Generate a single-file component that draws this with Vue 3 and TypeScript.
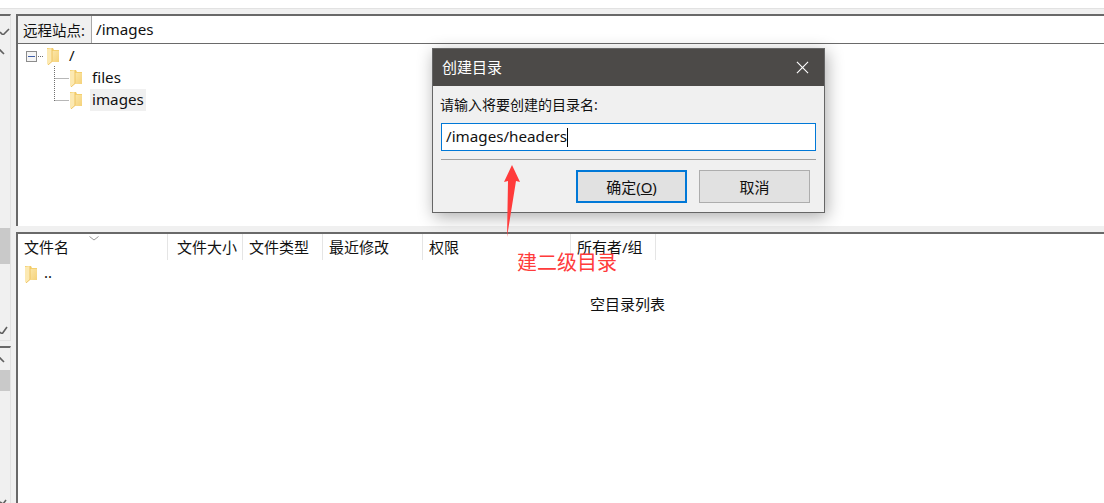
<script setup lang="ts">
const columns = [
  { label: '文件名', width: 150, sorted: true, right: false },
  { label: '文件大小', width: 75, sorted: false, right: true },
  { label: '文件类型', width: 80, sorted: false, right: false },
  { label: '最近修改', width: 100, sorted: false, right: false },
  { label: '权限', width: 148, sorted: false, right: false },
  { label: '所有者/组', width: 85, sorted: false, right: false },
]

const treeChildren = [
  { name: 'files', selected: false },
  { name: 'images', selected: true },
]
</script>

<template>
  <div class="app">
    <svg class="defs" aria-hidden="true">
      <defs>
        <linearGradient id="folder-body" x1="0" y1="0" x2="1" y2="1">
          <stop offset="0" stop-color="#fbe6a8"></stop>
          <stop offset="1" stop-color="#f5d27a"></stop>
        </linearGradient>
        <symbol id="folder" viewBox="0 0 12 17">
          <path d="M0 0H6L7 2H12V14H0Z" fill="#f4d06f"></path>
          <path d="M5 3H12V14H5Z" fill="url(#folder-body)"></path>
          <path d="M0 1L5 0V13.500L1 17L0 15.500Z" fill="#fce9b2"></path>
          <path d="M5 0V13.500L1 17" fill="none" stroke="#eec463" stroke-width="1"></path>
        </symbol>
      </defs>
    </svg>

    <div class="top-strip"></div>

    <div class="main">
      <aside class="side">
        <section class="side-pane side-pane--upper">
          <svg class="chev" viewBox="0 0 10 10" aria-hidden="true"><path d="M0 7L3 10L9 4"></path></svg>
          <svg class="chev chev--up" viewBox="0 0 10 10" aria-hidden="true"><path d="M-2 2L4 8"></path></svg>
          <div class="thumb thumb--upper"></div>
          <svg class="chev chev--end" viewBox="0 0 10 10" aria-hidden="true"><path d="M0 8L2 10L7 3"></path></svg>
        </section>
        <section class="side-pane side-pane--lower">
          <svg class="chev chev--lower-up" viewBox="0 0 10 10" aria-hidden="true"><path d="M-2 2L4 8"></path></svg>
          <div class="thumb thumb--lower"></div>
          <svg class="chev chev--foot" viewBox="0 0 10 10" aria-hidden="true"><path d="M0 8L3 10L6 6"></path></svg>
        </section>
      </aside>

      <div class="panels">
        <section class="panel panel--tree">
          <div class="address">
            <span class="address__label">远程站点:</span>
            <span class="address__value">/images</span>
          </div>

          <div class="tree">
            <svg class="tree__lines" viewBox="0 0 100 80" aria-hidden="true">
              <path d="M20 11.500H26M36.500 21V56M36.500 33.500H51M36.500 55.500H51"></path>
            </svg>
            <div class="tree__row tree__row--root">
              <span class="expander"><i></i></span>
              <svg class="folder" aria-hidden="true"><use href="#folder"></use></svg>
              <span class="tree__name tree__name--root">/</span>
            </div>
            <div v-for="child in treeChildren" :key="child.name" class="tree__row tree__row--child">
              <svg class="folder" aria-hidden="true"><use href="#folder"></use></svg>
              <span class="tree__name" :class="{ 'tree__name--selected': child.selected }">{{ child.name }}</span>
            </div>
          </div>
        </section>

        <section class="panel panel--list">
          <div class="list-head">
            <div
              v-for="col in columns"
              :key="col.label"
              class="list-head__cell"
              :class="{ 'list-head__cell--right': col.right }"
              :style="{ width: col.width + 'px' }"
            >
              <svg v-if="col.sorted" class="sort" viewBox="0 0 10 5" aria-hidden="true"><path d="M.5 .5L5 4L9.500 .5"></path></svg>
              {{ col.label }}
            </div>
          </div>
          <div class="list-row">
            <svg class="folder" aria-hidden="true"><use href="#folder"></use></svg>
            <span class="list-row__name">..</span>
          </div>
          <p class="list-empty">空目录列表</p>
        </section>
      </div>
    </div>

    <div class="dialog" role="dialog">
      <header class="dialog__title">
        <span>创建目录</span>
        <svg viewBox="0 0 14 14" aria-hidden="true"><path d="M1 1L13 13M13 1L1 13"></path></svg>
      </header>
      <div class="dialog__body">
        <label class="dialog__label">请输入将要创建的目录名:</label>
        <div class="dialog__input"><span class="dialog__text">/images/headers</span><i class="caret"></i></div>
        <hr class="dialog__rule" />
        <div class="dialog__actions">
          <button class="btn btn--primary" type="button">确定(<u>O</u>)</button>
          <button class="btn" type="button">取消</button>
        </div>
      </div>
    </div>

    <svg class="arrow" viewBox="0 0 20 74" aria-hidden="true">
      <path d="M9 0L17 17L13 16L4 72L5 16L1 17Z"></path>
    </svg>
    <span class="note">建二级目录</span>
  </div>
</template>

<style scoped>
.app {
  position: relative;
  display: flex;
  flex-direction: column;
  width: 1104px;
  height: 503px;
  overflow: hidden;
  background: #f0f0f0;
  color: #111;
  font-family: 'Noto Sans', 'Noto Sans CJK SC', sans-serif;
  font-size: 15px;
}

.defs {
  position: absolute;
  width: 0;
  height: 0;
}

.top-strip {
  flex: none;
  height: 8px;
  border-bottom: 1px solid #e2e2e2;
  background: #fff;
}

.main {
  display: grid;
  flex: 1;
  grid-template-columns: 11px minmax(0, 1fr);
  gap: 5px;
  min-height: 0;
  padding-top: 5px;
}

.side {
  display: flex;
  flex-direction: column;
  gap: 5px;
  min-height: 0;
}

.side-pane {
  display: flex;
  flex-direction: column;
  border-top: 2px solid #696969;
  border-right: 1px solid #e2e2e2;
  box-sizing: border-box;
}

.side-pane--upper {
  flex: none;
  height: 327px;
  border-bottom: 1px solid #e2e2e2;
}

.side-pane--lower {
  flex: 1;
  min-height: 0;
  overflow: hidden;
}

.chev {
  flex: none;
  width: 10px;
  height: 10px;
  fill: none;
  stroke: #606060;
  stroke-width: 1.6;
}

.side-pane--upper > .chev:first-child {
  margin-top: 9px;
}

.chev--up {
  margin-top: 11px;
}

.thumb {
  flex: none;
  width: 10px;
  background: #c9c9c9;
}

.thumb--upper {
  height: 36px;
  margin-top: 172px;
}

.chev--end {
  margin-top: 60px;
}

.chev--lower-up {
  margin-top: 6px;
}

.thumb--lower {
  height: 21px;
  margin-top: 6px;
}

.chev--foot {
  margin-top: 103px;
}

.panels {
  display: flex;
  flex-direction: column;
  gap: 6px;
  min-width: 0;
  min-height: 0;
}

.panel {
  position: relative;
  border-top: 2px solid #696969;
  border-left: 2px solid #696969;
  background: #fff;
  box-sizing: border-box;
}

.panel--tree {
  flex: none;
  height: 212px;
}

.panel--list {
  flex: 1;
  min-height: 0;
}

.address {
  display: flex;
  align-items: stretch;
  height: 28px;
  border-bottom: 1px solid #6a6a6a;
  box-sizing: border-box;
}

.address__label {
  display: flex;
  flex: none;
  align-items: center;
  width: 74px;
  padding-left: 5px;
  border-right: 1px solid #a8a8a8;
  background: #f0f0f0;
  box-sizing: border-box;
  font-size: 14.5px;
}

.address__value {
  display: flex;
  align-items: center;
  padding-left: 4px;
  padding-bottom: 1px;
  font-size: 15.2px;
}

.tree {
  position: relative;
  padding-top: 1px;
}

.tree__lines {
  position: absolute;
  top: 1px;
  left: 0;
  width: 100px;
  height: 80px;
  fill: none;
  stroke: #6f6f6f;
  stroke-dasharray: 1 1;
  stroke-width: 1;
}

.tree__row {
  position: relative;
  display: flex;
  align-items: center;
  height: 22px;
}

.tree__row--root {
  padding-left: 8px;
}

.tree__row--child {
  padding-left: 52px;
}

.expander {
  display: flex;
  flex: none;
  align-items: center;
  justify-content: center;
  width: 11px;
  height: 11px;
  margin-right: 10px;
  border: 1px solid #8c8c8c;
  background: #f5f5f5;
  box-sizing: border-box;
}

.expander i {
  display: block;
  width: 7px;
  height: 1px;
  background: #3f5ea8;
}

.folder {
  flex: none;
  width: 12px;
  height: 17px;
}

.tree__name {
  display: block;
  margin-left: 8px;
  padding: 0 2px 2px;
  font-size: 15.2px;
  line-height: 20px;
}

.tree__name--selected {
  background: #f0f0f0;
}

.list-head {
  display: flex;
  height: 26px;
}

.list-head__cell {
  position: relative;
  flex: none;
  height: 26px;
  padding-left: 6px;
  border-right: 1px solid #e5e5e5;
  box-sizing: border-box;
  line-height: 26px;
  white-space: nowrap;
}

.list-head__cell--right {
  padding-right: 5px;
  text-align: right;
}

.sort {
  position: absolute;
  top: 2px;
  left: 71px;
  width: 10px;
  height: 5px;
  fill: none;
  stroke: #999;
  stroke-width: 1;
}

.list-row {
  display: flex;
  align-items: center;
  height: 22px;
  margin-top: 3px;
  padding-left: 7px;
}

.list-row__name {
  margin-bottom: 4px;
  margin-left: 7px;
}

.list-empty {
  margin: 7px 0 0;
  padding-left: 572px;
  line-height: 24px;
}

.dialog {
  position: absolute;
  top: 48px;
  left: 432px;
  width: 393px;
  height: 165px;
  border: 1px solid #666;
  background: #f0f0f0;
  box-shadow: 2px 4px 16px rgba(0, 0, 0, 0.32);
  box-sizing: border-box;
}

.dialog__title {
  display: flex;
  align-items: center;
  justify-content: space-between;
  height: 37px;
  padding: 0 15px 2px 9px;
  background: #4c4a48;
  color: #fff;
  box-sizing: border-box;
}

.dialog__title svg {
  width: 13px;
  height: 13px;
  margin-top: 2px;
  fill: none;
  stroke: #fff;
  stroke-width: 1.2;
}

.dialog__body {
  display: flex;
  flex-direction: column;
  padding: 8px 8px 0;
}

.dialog__label {
  height: 21px;
  margin-left: -1px;
  font-size: 14px;
  line-height: 21px;
}

.dialog__input {
  display: flex;
  align-items: center;
  height: 28px;
  margin-top: 8px;
  padding-left: 4px;
  border: 1px solid #0078d7;
  background: #fff;
  box-sizing: border-box;
  font-size: 15.2px;
}

.dialog__text {
  margin-bottom: 2px;
}

.caret {
  display: block;
  width: 1px;
  height: 19px;
  background: #000;
}

.dialog__rule {
  width: 100%;
  height: 1px;
  margin: 8px 0 0;
  border: 0;
  background: #a0a0a0;
}

.dialog__actions {
  display: flex;
  gap: 12px;
  justify-content: flex-end;
  margin-top: 10px;
  padding-right: 6px;
}

.btn {
  width: 111px;
  height: 33px;
  padding: 0;
  border: 1px solid #adadad;
  background: #e1e1e1;
  color: #111;
  font: inherit;
}

.btn--primary {
  border: 2px solid #0078d7;
}

.arrow {
  position: absolute;
  top: 165px;
  left: 503px;
  width: 20px;
  height: 74px;
  fill: #ff3b3b;
}

.note {
  position: absolute;
  top: 252px;
  left: 517px;
  color: #ff3b3b;
  font-size: 20px;
  line-height: 22px;
}
</style>
